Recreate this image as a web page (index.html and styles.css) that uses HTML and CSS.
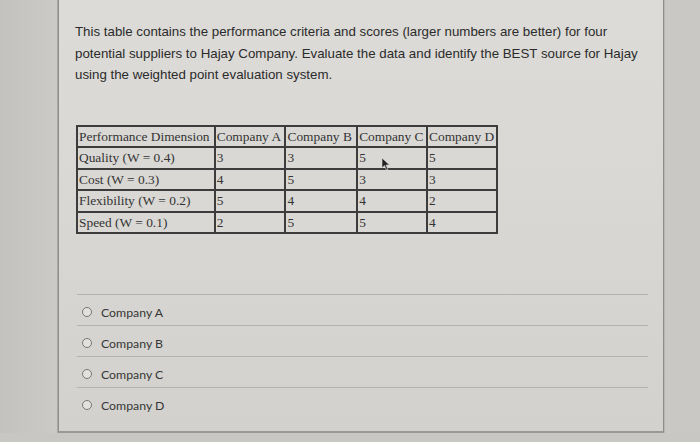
FILE: index.html
```html
<!DOCTYPE html>
<html>
<head>
<meta charset="utf-8">
<link rel="stylesheet" href="styles.css">
</head>
<body>
<div class="page">
  <div class="strip-left"></div>
  <div class="card">
    <p class="question">This table contains the performance criteria and scores (larger numbers are better) for four potential suppliers to Hajay Company. Evaluate the data and identify the BEST source for Hajay using the weighted point evaluation system.</p>
    <div class="table-wrap">
      <table class="scores">
        <tr><td class="c0">Performance Dimension</td><td class="c1">Company A</td><td class="c2">Company B</td><td class="c3">Company C</td><td class="c4">Company D</td></tr>
        <tr><td>Quality (W = 0.4)</td><td>3</td><td>3</td><td>5</td><td>5</td></tr>
        <tr><td>Cost (W = 0.3)</td><td>4</td><td>5</td><td>3</td><td>3</td></tr>
        <tr><td>Flexibility (W = 0.2)</td><td>5</td><td>4</td><td>4</td><td>2</td></tr>
        <tr><td>Speed (W = 0.1)</td><td>2</td><td>5</td><td>5</td><td>4</td></tr>
      </table>
      <svg class="cursor" width="10" height="14" viewBox="0 0 10 14"><path d="M1 1 L1 11 L3.5 8.5 L5.5 13 L7 12.3 L5 8 L8.5 8 Z" fill="#222" stroke="#ddd" stroke-width="0.6"/></svg>
    </div>
    <div class="options">
      <div class="option"><span class="radio"></span><span class="label">Company A</span></div>
      <div class="option"><span class="radio"></span><span class="label">Company B</span></div>
      <div class="option"><span class="radio"></span><span class="label">Company C</span></div>
      <div class="option last"><span class="radio"></span><span class="label">Company D</span></div>
    </div>
  </div>
  <div class="strip-right"></div>
</div>
</body>
</html>
```
FILE: styles.css
```css
html, body {
  margin: 0;
  padding: 0;
}
body {
  width: 700px;
  height: 442px;
  overflow: hidden;
  background: #c8c7c3;
}
.page {
  display: flex;
  height: 433px;
}
.strip-left {
  width: 57px;
  flex: none;
  background: linear-gradient(90deg, #c3c2be, #cbcac6);
  border-right: 1px solid #a9a8a4;
}
.card {
  width: 606px;
  flex: none;
  background: linear-gradient(180deg, #dcdbd7 0%, #d9d8d4 40%, #d2d1cd 100%);
  border-right: 1px solid #8e8d89;
  border-bottom: 2px solid #9a9995;
  border-left: 1px solid #8f8e8a;
  box-sizing: border-box;
  height: 433px;
  padding: 21px 0 0 16px;
}
.strip-right {
  flex: 1;
  background: #c9c8c4;
  border-left: 1px solid #b8b7b3;
}
.question {
  margin: 0;
  width: 575px;
  font-family: "Liberation Sans", Arial, sans-serif;
  font-size: 13.3px;
  line-height: 21.5px;
  color: #2b2b2b;
}
.table-wrap {
  position: relative;
  margin-top: 39px;
  margin-left: 1px;
  width: 422px;
}
.scores {
  border-collapse: collapse;
  font-family: "Liberation Serif", "Times New Roman", serif;
  font-size: 13.4px;
  color: #333;
  background: #d9d8d4;
}
.scores td {
  border: 2px solid #3c3c3c;
  height: 17.5px;
  padding: 1px 1px 1px 1px;
  line-height: 17.5px;
  white-space: nowrap;
}
.scores .c0 { width: 134px; }
.scores .c1 { width: 67px; }
.scores .c2 { width: 68px; }
.scores .c3 { width: 66px; }
.scores .c4 { width: 66px; }
.cursor {
  position: absolute;
  left: 305px;
  top: 32px;
}
.options {
  margin-top: 60px;
  margin-left: 2px;
  width: 571px;
  border-top: 1px solid #b4b3af;
}
.option {
  display: flex;
  align-items: center;
  box-sizing: content-box;
  border-bottom: 1px solid #b4b3af;
  padding-left: 5px;
  padding-top: 4px;
  height: 26px;
  font-family: Lato, "Open Sans", sans-serif;
  font-size: 12.3px;
  color: #363636;
}
.option.last {
  border-bottom: none;
}
.radio {
  width: 8px;
  height: 8px;
  border: 1.5px solid #777;
  border-radius: 50%;
  margin-right: 9px;
  background: #e2e1dd;
}
```
